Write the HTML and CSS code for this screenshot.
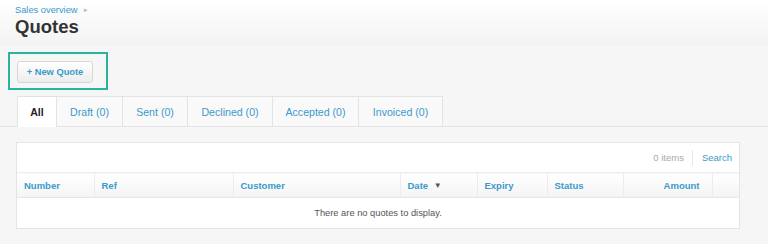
FILE: index.html
```html
<!DOCTYPE html>
<html lang="en">

<head>
    <meta charset="UTF-8">
    <meta name="viewport" content="width=device-width, initial-scale=1.0">
    <title>Quotes</title>
    <link rel="stylesheet" href="styles.css">
</head>

<body>
    <div class="page-header">
        <div class="breadcrumb"><a href="#">Sales overview</a><span class="crumb-arrow">&#9656;</span></div>
        <h1>Quotes</h1>
    </div>

    <div class="actions">
        <div class="highlight">
            <button class="btn">+ New Quote</button>
        </div>
    </div>

    <div class="tabs">
        <a class="tab active" href="#">All</a>
        <a class="tab" href="#">Draft (0)</a>
        <a class="tab" href="#">Sent (0)</a>
        <a class="tab" href="#">Declined (0)</a>
        <a class="tab" href="#">Accepted (0)</a>
        <a class="tab" href="#">Invoiced (0)</a>
    </div>

    <div class="panel">
        <div class="toolbar">
            <span class="count">0 items</span>
            <a class="search" href="#">Search</a>
        </div>
        <table class="grid">
            <thead>
                <tr>
                    <th class="c-number">Number</th>
                    <th class="c-ref">Ref</th>
                    <th class="c-customer">Customer</th>
                    <th class="c-date">Date <span class="sort">&#9660;</span></th>
                    <th class="c-expiry">Expiry</th>
                    <th class="c-status">Status</th>
                    <th class="c-amount">Amount</th>
                    <th class="c-blank"></th>
                </tr>
            </thead>
            <tbody>
                <tr>
                    <td class="empty" colspan="8">There are no quotes to display.</td>
                </tr>
            </tbody>
        </table>
    </div>
</body>

</html>
```

FILE: styles.css
```css
body {
    margin: 0;
    background: #f6f6f6;
    font-family: "Liberation Sans", Arial, sans-serif;
    font-size: 9.5px;
    color: #333;
}

a {
    color: #3a9acb;
    text-decoration: none;
}

/* Header */
.page-header {
    height: 45px;
    padding: 4px 15px 0;
    box-sizing: border-box;
    background: linear-gradient(#ffffff, #f3f3f3);
}

.breadcrumb {
    font-size: 9.3px;
    line-height: 12px;
}

.crumb-arrow {
    color: #b5b5b5;
    font-size: 7px;
    margin-left: 6px;
    vertical-align: 1px;
}

h1 {
    margin: 0;
    font-size: 18.5px;
    line-height: 22px;
    color: #333;
}

/* New quote */
.actions {
    padding: 7px 0 0 8px;
    height: 44px;
    box-sizing: border-box;
}

.highlight {
    box-sizing: border-box;
    width: 100px;
    height: 38px;
    border: 2px solid #2bb39b;
    padding: 7px 0 0 7px;
}

.btn {
    display: block;
    width: 76px;
    height: 22px;
    padding: 0;
    border: 1px solid #d6d6d6;
    border-radius: 3px;
    background: linear-gradient(#ffffff, #ededed);
    color: #3a9acb;
    font-family: inherit;
    font-size: 9.3px;
    font-weight: bold;
    cursor: pointer;
}

/* Tabs */
.tabs {
    display: flex;
    margin-top: 7px;
    padding-left: 17px;
    border-bottom: 1px solid #e2e2e2;
    height: 31px;
    box-sizing: border-box;
}

.tab {
    display: flex;
    align-items: center;
    justify-content: center;
    border: 1px solid #e3e3e3;
    border-bottom: none;
    border-left: none;
    background: #f9f9f9;
    font-size: 10.6px;
    height: 30px;
    box-sizing: border-box;
}

.tab:nth-child(1) { width: 40px; border-left: 1px solid #e3e3e3; }
.tab:nth-child(2) { width: 66px; }
.tab:nth-child(3) { width: 65px; }
.tab:nth-child(4) { width: 85px; }
.tab:nth-child(5) { width: 86px; }
.tab:nth-child(6) { width: 84px; }

.tab.active {
    background: #fff;
    color: #222;
    font-weight: bold;
    height: 31px;
}

/* Panel */
.panel {
    margin: 15px 0 0 16px;
    width: 724px;
    background: #fff;
    border: 1px solid #e4e4e4;
    box-sizing: border-box;
}

.toolbar {
    height: 29px;
    display: flex;
    justify-content: flex-end;
    align-items: center;
    padding-right: 7px;
}

.count {
    color: #a8a8a8;
    padding-right: 8px;
    border-right: 1px solid #e6e6e6;
    line-height: 16px;
}

.search {
    margin-left: 9px;
}

.grid {
    width: 722px;
    border-collapse: collapse;
    table-layout: fixed;
}

.grid th {
    height: 25px;
    padding: 0 0 0 7px;
    text-align: left;
    color: #3a9acb;
    font-weight: bold;
    font-size: 9.5px;
    background: linear-gradient(#ffffff, #f4f4f4);
    border-top: 1px solid #ececec;
    border-bottom: 1px solid #e6e6e6;
    border-left: 1px solid #ececec;
    box-sizing: border-box;
}

.grid th:first-child {
    border-left: none;
}

.c-number { width: 77px; }
.c-ref { width: 139px; }
.c-customer { width: 167px; }
.c-date { width: 77px; }
.c-expiry { width: 70px; }
.c-status { width: 76px; }
.c-amount { width: 89px; }
.c-blank { width: 27px; }

.grid th.c-amount {
    text-align: right;
    padding-right: 12px;
}

.sort {
    color: #555;
    font-size: 8px;
    margin-left: 3px;
    vertical-align: 1px;
}

.empty {
    height: 30px;
    text-align: center;
    color: #555;
    font-size: 9.3px;
    padding: 0;
}
```
